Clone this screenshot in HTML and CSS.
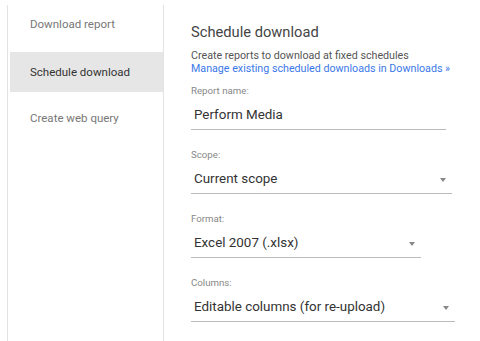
FILE: index.html
```html
<!DOCTYPE html>
<html>
<head>
  <meta charset="UTF-8">
  <title>Schedule download</title>
  <link rel="stylesheet" href="styles.css">
</head>
<body>
  <div class="page">
    <div class="sidebar">
      <div class="nav-item">Download report</div>
      <div class="nav-item selected">Schedule download</div>
      <div class="nav-item">Create web query</div>
    </div>
    <div class="main">
      <h1>Schedule download</h1>
      <p class="intro">
        Create reports to download at fixed schedules<br>
        <a href="#">Manage existing scheduled downloads in Downloads &raquo;</a>
      </p>
      <div class="field">
        <div class="label">Report name:</div>
        <div class="input name-input">Perform Media</div>
      </div>
      <div class="field">
        <div class="label">Scope:</div>
        <div class="input select scope-input">Current scope<span class="arrow"></span></div>
      </div>
      <div class="field">
        <div class="label">Format:</div>
        <div class="input select format-input">Excel 2007 (.xlsx)<span class="arrow"></span></div>
      </div>
      <div class="field">
        <div class="label">Columns:</div>
        <div class="input select columns-input">Editable columns (for re-upload)<span class="arrow"></span></div>
      </div>
    </div>
  </div>
</body>
</html>
```

FILE: styles.css
```css
body {
  margin: 0;
  font-family: Roboto, "Liberation Sans", Arial, sans-serif;
  background: #fff;
  overflow: hidden;
}
.page {
  display: flex;
  height: 336px;
  margin-top: 5px;
}
.sidebar {
  margin-left: 7px;
  border-left: 1px solid #e3e3e3;
  border-right: 1px solid #e3e3e3;
  padding-left: 2px;
  width: 153px;
  display: flex;
  flex-direction: column;
  gap: 6px;
}
.nav-item {
  height: 40px;
  line-height: 40px;
  padding-left: 20px;
  font-size: 11.5px;
  color: #777;
}
.nav-item:first-child {
  height: 38px;
  line-height: 38px;
  margin-bottom: 3px;
}
.nav-item.selected {
  background: #e6e6e6;
  color: #333;
}
.main {
  padding-left: 27px;
  flex: 1;
}
h1 {
  margin: 18px 0 0;
  font-size: 14.7px;
  font-weight: 400;
  color: #444;
  line-height: 18px;
}
.intro {
  margin: 8px 0 0;
  font-size: 10.7px;
  line-height: 13px;
  color: #555;
}
.intro a {
  color: #3b78e7;
  text-decoration: none;
}
.field {
  margin-top: 10px;
}
.field + .field {
  margin-top: 19px;
}
.label {
  font-size: 9.7px;
  color: #888;
  line-height: 12px;
}
.input {
  position: relative;
  margin-top: 8px;
  padding: 0 0 4px 3px;
  font-size: 13.4px;
  line-height: 20px;
  color: #333;
  border-bottom: 1px solid #bbb;
}
.name-input {
  width: 252px;
}
.scope-input {
  width: 258px;
}
.format-input {
  width: 227px;
}
.columns-input {
  width: 261px;
}
.arrow {
  position: absolute;
  right: 6px;
  top: 9px;
  border-left: 3.5px solid transparent;
  border-right: 3.5px solid transparent;
  border-top: 4px solid #888;
}
```
